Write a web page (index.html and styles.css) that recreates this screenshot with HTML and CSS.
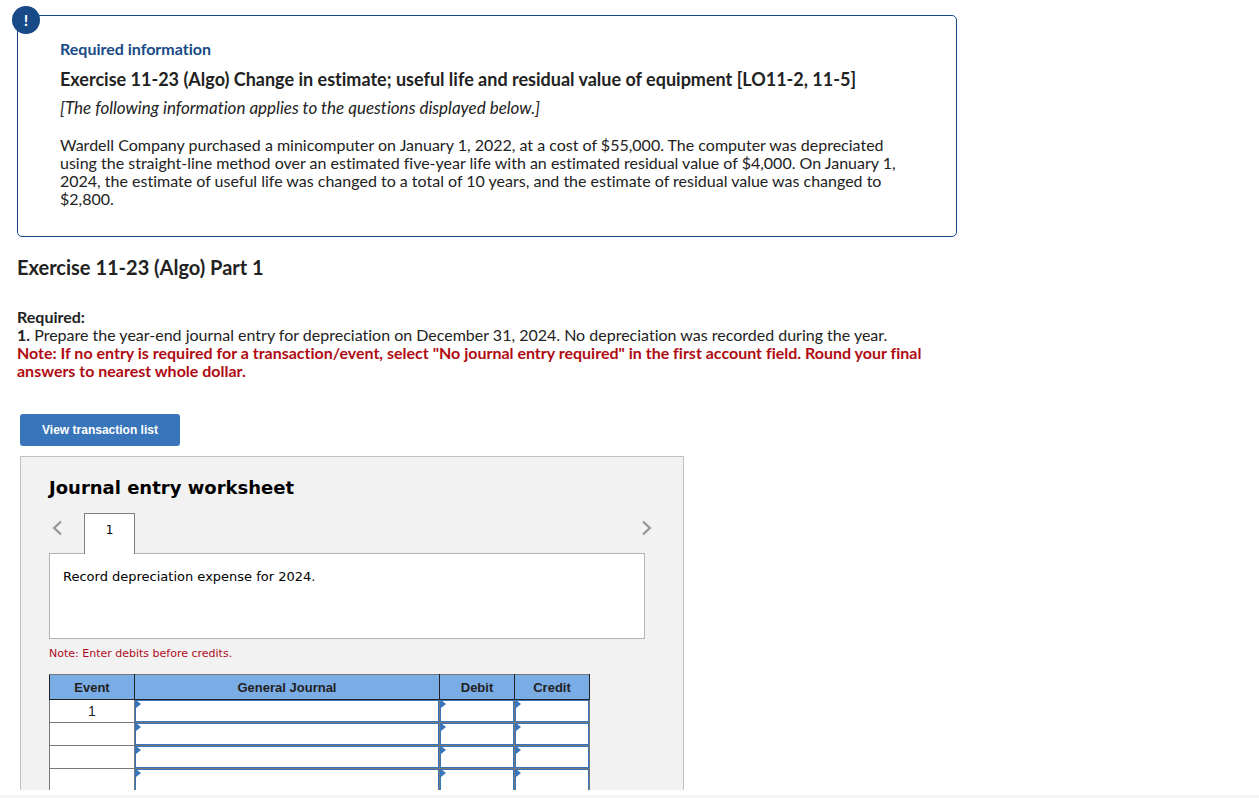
FILE: index.html
```html
<!DOCTYPE html>
<html lang="en">
<head>
    <meta charset="UTF-8">
    <meta name="viewport" content="width=device-width, initial-scale=1.0">
    <title>Exercise 11-23 (Algo) Part 1</title>
    <link rel="stylesheet" href="styles.css">
</head>
<body>

<main class="content">
    <section class="info-box">
        <div class="info-badge">!</div>
        <h3 class="info-label">Required information</h3>
        <h2 class="info-title">Exercise 11-23 (Algo) Change in estimate; useful life and residual value of equipment [LO11-2, 11-5]</h2>
        <p class="info-applies">[The following information applies to the questions displayed below.]</p>
        <p class="info-text">Wardell Company purchased a minicomputer on January 1, 2022, at a cost of $55,000. The computer was depreciated using the straight-line method over an estimated five-year life with an estimated residual value of $4,000. On January 1, 2024, the estimate of useful life was changed to a total of 10 years, and the estimate of residual value was changed to $2,800.</p>
    </section>

    <h1 class="part-title">Exercise 11-23 (Algo) Part 1</h1>

    <div class="required">
        <strong>Required:</strong>
        <p><strong>1.</strong> Prepare the year-end journal entry for depreciation on December 31, 2024. No depreciation was recorded during the year.</p>
        <p class="required-note">Note: If no entry is required for a transaction/event, select "No journal entry required" in the first account field. Round your final answers to nearest whole dollar.</p>
    </div>

    <button class="view-button" type="button">View transaction list</button>

    <section class="worksheet">
        <h2 class="worksheet-title">Journal entry worksheet</h2>

        <div class="tabs">
            <button class="arrow" type="button" aria-label="Previous">
                <svg width="10" height="16" viewBox="0 0 10 16"><path d="M9 1.5 L2.2 8 L9 14.5" fill="none" stroke="#999" stroke-width="2.4"/></svg>
            </button>
            <button class="tab" type="button">1</button>
            <button class="arrow arrow-next" type="button" aria-label="Next">
                <svg width="10" height="16" viewBox="0 0 10 16"><path d="M1 1.5 L7.8 8 L1 14.5" fill="none" stroke="#999" stroke-width="2.4"/></svg>
            </button>
        </div>

        <div class="description">Record depreciation expense for 2024.</div>
        <p class="worksheet-note">Note: Enter debits before credits.</p>

        <table class="journal">
            <thead>
                <tr>
                    <th class="col-event">Event</th>
                    <th class="col-journal">General Journal</th>
                    <th class="col-amount">Debit</th>
                    <th class="col-amount">Credit</th>
                </tr>
            </thead>
            <tbody>
                <tr>
                    <td>1</td>
                    <td class="entry"><input type="text" aria-label="Account, row 1"></td>
                    <td class="entry"><input type="text" aria-label="Debit, row 1"></td>
                    <td class="entry"><input type="text" aria-label="Credit, row 1"></td>
                </tr>
                <tr>
                    <td></td>
                    <td class="entry"><input type="text" aria-label="Account, row 2"></td>
                    <td class="entry"><input type="text" aria-label="Debit, row 2"></td>
                    <td class="entry"><input type="text" aria-label="Credit, row 2"></td>
                </tr>
                <tr>
                    <td></td>
                    <td class="entry"><input type="text" aria-label="Account, row 3"></td>
                    <td class="entry"><input type="text" aria-label="Debit, row 3"></td>
                    <td class="entry"><input type="text" aria-label="Credit, row 3"></td>
                </tr>
                <tr>
                    <td></td>
                    <td class="entry"><input type="text" aria-label="Account, row 4"></td>
                    <td class="entry"><input type="text" aria-label="Debit, row 4"></td>
                    <td class="entry"><input type="text" aria-label="Credit, row 4"></td>
                </tr>
            </tbody>
        </table>
    </section>
</main>
<footer class="bottom-bar"></footer>

</body>
</html>
```
FILE: styles.css
```css
* {
    box-sizing: border-box;
}

body {
    margin: 0;
    height: 100vh;
    display: flex;
    flex-direction: column;
    background-color: #fff;
    color: #222;
    font-family: Lato, sans-serif;
    font-size: 16px;
    font-variant-ligatures: no-common-ligatures;
    line-height: 18px;
}

h1, h2, h3, p {
    margin: 0;
}

button {
    font: inherit;
    cursor: pointer;
}

.content {
    flex: 1;
    min-height: 0;
    overflow: hidden;
    padding: 15px 17px 0;
}

.bottom-bar {
    flex: none;
    height: 3px;
    margin-top: 5px;
    background-color: #f4f4f4;
}

/* Information box */
.info-box {
    position: relative;
    max-width: 940px;
    padding: 24px 60px 28px 42px;
    border: 1px solid #174a86;
    border-radius: 5px;
}

.info-badge {
    position: absolute;
    top: -10px;
    left: -6px;
    width: 28px;
    height: 28px;
    border-radius: 50%;
    background-color: #174a86;
    color: #fff;
    font-weight: bold;
    line-height: 28px;
    text-align: center;
}

.info-label {
    color: #174a86;
    font-size: 16px;
}

.info-title {
    margin-top: 11px;
    font-size: 18px;
    line-height: 20px;
}

.info-applies {
    margin-top: 10px;
    font-size: 17px;
    font-style: italic;
}

.info-text {
    margin-top: 19px;
}

/* Question */
.part-title {
    margin-top: 18px;
    font-size: 20px;
    line-height: 24px;
}

.required {
    max-width: 940px;
    margin-top: 29px;
}

.required-note {
    color: #b00b12;
    font-weight: bold;
}

.view-button {
    display: block;
    width: 160px;
    height: 32px;
    margin: 34px 0 10px 3px;
    padding: 0;
    border: none;
    border-radius: 3px;
    background-color: #3875ba;
    color: #fff;
    font-family: "Liberation Sans", Arial, sans-serif;
    font-size: 12px;
    font-weight: bold;
}

/* Worksheet */
.worksheet {
    max-width: 664px;
    margin-left: 3px;
    padding: 20px 38px 30px 28px;
    border: 1px solid #c0c0c0;
    background-color: #f2f2f2;
    color: #000;
    font-family: "DejaVu Sans", Verdana, sans-serif;
    font-size: 13px;
}

.worksheet-title {
    font-size: 18px;
    line-height: 22px;
}

.tabs {
    display: flex;
    align-items: flex-start;
    margin-top: 14px;
    margin-bottom: -1px;
}

.arrow {
    width: 16px;
    height: 30px;
    padding: 0;
    border: none;
    background: none;
}

.arrow svg {
    display: block;
    margin: 0 auto;
}

.arrow-next {
    margin-left: auto;
    margin-right: -10px;
}

.tab {
    position: relative;
    width: 51px;
    height: 41px;
    margin-left: 19px;
    padding: 0 0 8px;
    border: 1px solid #808080;
    border-bottom: none;
    background-color: #fff;
    font-size: 12px;
}

.description {
    height: 86px;
    padding: 14px 13px;
    border: 1px solid #b4b4b4;
    background-color: #fff;
}

.worksheet-note {
    margin-top: 6px;
    color: #b00b22;
    font-size: 11px;
}

/* Journal table */
.journal {
    width: 541px;
    margin-top: 11px;
    border-collapse: collapse;
    table-layout: fixed;
    color: #222;
    font-family: "Liberation Sans", Arial, sans-serif;
    font-size: 14px;
}

.journal th {
    height: 25px;
    padding: 2px 0 0;
    border: 1px solid #222;
    border-top-color: #777;
    background-color: #7aade6;
    font-size: 13px;
}

.journal td {
    height: 23px;
    padding: 0;
    border: 1px solid #777;
    background-color: #fff;
    text-align: center;
}

.col-event {
    width: 85px;
}

.col-amount {
    width: 75px;
}

.journal .entry {
    position: relative;
}

.entry input {
    display: block;
    width: 100%;
    height: 22px;
    padding: 0 8px;
    border: 1px solid #3875ba;
    border-radius: 0;
    background-color: #fff;
    font: inherit;
}

/* Small marker in the corner of each editable cell */
.entry::before {
    content: "";
    position: absolute;
    top: 0;
    left: 1px;
    border: 4px solid transparent;
    border-left: 5px solid #3875ba;
    border-right: none;
}
```
